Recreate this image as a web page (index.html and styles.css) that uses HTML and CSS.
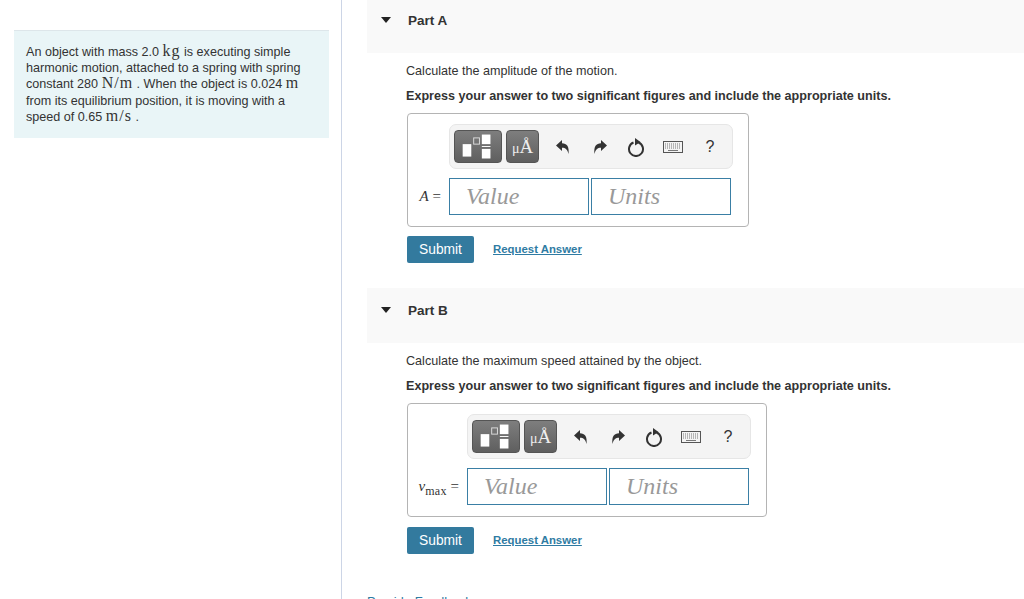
FILE: index.html
```html
<!DOCTYPE html>
<html lang="en">
<head>
    <meta charset="UTF-8">
    <title>Simple Harmonic Motion</title>
    <link rel="stylesheet" href="styles.css">
</head>
<body>
    <div class="page-container">
        <aside class="sidebar">
            <div class="intro">
                An object with mass 2.0 <span class="math">kg</span> is executing simple harmonic motion, attached to a spring with spring constant 280 <span class="math">N/m</span> . When the object is 0.024 <span class="math">m</span> from its equilibrium position, it is moving with a speed of 0.65 <span class="math">m/s</span> .
            </div>
        </aside>

        <main class="main-content">
            <!-- Part A -->
            <section class="part part-a">
                <div class="part-header">
                    <span class="caret"></span>
                    <h2>Part A</h2>
                </div>
                <p class="question">Calculate the amplitude of the motion.</p>
                <p class="instruction">Express your answer to two significant figures and include the appropriate units.</p>
                <div class="answer-box">
                    <div class="toolbar">
                        <button class="tool-btn templates" type="button">
                            <svg width="48" height="32" viewBox="0 0 48 32">
                                <rect x="8" y="13" width="9" height="13" fill="#fff"/>
                                <rect x="19.500" y="6.500" width="6" height="6.500" fill="none" stroke="#ddd"/>
                                <rect x="28" y="3" width="9" height="10" fill="#fff"/>
                                <rect x="28" y="15" width="9" height="1" fill="#fff"/>
                                <rect x="28" y="18" width="9" height="10" fill="#fff"/>
                            </svg>
                        </button>
                        <button class="tool-btn symbols" type="button"><span class="mu">μ</span>Å</button>
                        <span class="tool-icon undo">
                            <svg width="16" height="16" viewBox="0 0 16 16"><path d="M1 6.500 7 1V4.200C11.800 4.200 14.500 7.500 13.500 15 12.500 10.500 10.500 8.800 7 8.800V12Z" fill="#333"/></svg>
                        </span>
                        <span class="tool-icon redo">
                            <svg width="16" height="16" viewBox="0 0 16 16"><path d="M15 6.500 9 1V4.200C4.200 4.200 1.500 7.500 2.500 15 3.500 10.500 5.500 8.800 9 8.800V12Z" fill="#333"/></svg>
                        </span>
                        <span class="tool-icon reset">
                            <svg width="18" height="20" viewBox="0 0 18 20"><path d="M6.500 5.500A7 7 0 1 0 11.500 5.500" fill="none" stroke="#333" stroke-width="2"/><path d="M8 1 13.500 5 8 8.500Z" fill="#333"/></svg>
                        </span>
                        <span class="tool-icon keyboard">
                            <svg width="20" height="12" viewBox="0 0 20 12"><rect x=".5" y=".5" width="19" height="11" fill="#f4f4f4" stroke="#555"/><path d="M2 3h16M2 5h16M2 7h16" stroke="#777" stroke-dasharray="1 1"/><path d="M5 9.500h10" stroke="#777"/></svg>
                        </span>
                        <span class="tool-icon help">?</span>
                    </div>
                    <div class="answer-row">
                        <span class="var-label"><i>A</i> =</span>
                        <div class="field">Value</div>
                        <div class="field">Units</div>
                    </div>
                </div>
                <div class="actions">
                    <button class="submit" type="button">Submit</button>
                    <a class="request" href="#">Request Answer</a>
                </div>
            </section>

            <!-- Part B -->
            <section class="part part-b">
                <div class="part-header">
                    <span class="caret"></span>
                    <h2>Part B</h2>
                </div>
                <p class="question">Calculate the maximum speed attained by the object.</p>
                <p class="instruction">Express your answer to two significant figures and include the appropriate units.</p>
                <div class="answer-box">
                    <div class="toolbar">
                        <button class="tool-btn templates" type="button">
                            <svg width="48" height="32" viewBox="0 0 48 32">
                                <rect x="8" y="13" width="9" height="13" fill="#fff"/>
                                <rect x="19.500" y="6.500" width="6" height="6.500" fill="none" stroke="#ddd"/>
                                <rect x="28" y="3" width="9" height="10" fill="#fff"/>
                                <rect x="28" y="15" width="9" height="1" fill="#fff"/>
                                <rect x="28" y="18" width="9" height="10" fill="#fff"/>
                            </svg>
                        </button>
                        <button class="tool-btn symbols" type="button"><span class="mu">μ</span>Å</button>
                        <span class="tool-icon undo">
                            <svg width="16" height="16" viewBox="0 0 16 16"><path d="M1 6.500 7 1V4.200C11.800 4.200 14.500 7.500 13.500 15 12.500 10.500 10.500 8.800 7 8.800V12Z" fill="#333"/></svg>
                        </span>
                        <span class="tool-icon redo">
                            <svg width="16" height="16" viewBox="0 0 16 16"><path d="M15 6.500 9 1V4.200C4.200 4.200 1.500 7.500 2.500 15 3.500 10.500 5.500 8.800 9 8.800V12Z" fill="#333"/></svg>
                        </span>
                        <span class="tool-icon reset">
                            <svg width="18" height="20" viewBox="0 0 18 20"><path d="M6.500 5.500A7 7 0 1 0 11.500 5.500" fill="none" stroke="#333" stroke-width="2"/><path d="M8 1 13.500 5 8 8.500Z" fill="#333"/></svg>
                        </span>
                        <span class="tool-icon keyboard">
                            <svg width="20" height="12" viewBox="0 0 20 12"><rect x=".5" y=".5" width="19" height="11" fill="#f4f4f4" stroke="#555"/><path d="M2 3h16M2 5h16M2 7h16" stroke="#777" stroke-dasharray="1 1"/><path d="M5 9.500h10" stroke="#777"/></svg>
                        </span>
                        <span class="tool-icon help">?</span>
                    </div>
                    <div class="answer-row">
                        <span class="var-label"><i>v</i><sub>max</sub> =</span>
                        <div class="field">Value</div>
                        <div class="field">Units</div>
                    </div>
                </div>
                <div class="actions">
                    <button class="submit" type="button">Submit</button>
                    <a class="request" href="#">Request Answer</a>
                </div>
            </section>

            <a class="feedback" href="#">Provide Feedback</a>
        </main>
    </div>
</body>
</html>
```

FILE: styles.css
```css
* {
    margin: 0;
    padding: 0;
    box-sizing: border-box;
}

html,
body {
    height: 599px;
    overflow: hidden;
}

body {
    font-family: "Liberation Sans", Arial, sans-serif;
    font-size: 12.600px;
    color: #333;
    background: white;
}

.page-container {
    display: flex;
    height: 599px;
}

.sidebar {
    width: 342px;
    flex: none;
    padding: 30px 12px 0 14px;
    border-right: 1px solid #ccd5e6;
}

.intro {
    height: 108px;
    padding: 13px 12px 0 12px;
    background: #e9f5f7;
    border-top: 1px solid #dde6ea;
    line-height: 16.200px;
}

.math {
    font-family: "Liberation Serif", serif;
    font-size: 16px;
    line-height: 0;
    letter-spacing: 1px;
}

.main-content {
    flex: 1;
    min-width: 0;
    padding-left: 25px;
}

.part-header {
    display: flex;
    align-items: flex-start;
    background: #f9f9f9;
    padding-left: 14px;
}

.part-a .part-header {
    height: 53px;
    padding-top: 13px;
}

.part-b .part-header {
    height: 55px;
    padding-top: 15px;
}

.caret {
    width: 0;
    height: 0;
    margin-top: 4px;
    margin-right: 17px;
    border-left: 5.500px solid transparent;
    border-right: 5.500px solid transparent;
    border-top: 6px solid #222;
}

.part-header h2 {
    font-size: 13.500px;
    line-height: 15px;
    font-weight: bold;
}

.question {
    margin: 11px 0 0 39px;
    line-height: 15px;
}

.instruction {
    margin: 10px 0 0 39px;
    line-height: 15px;
    font-weight: bold;
}

.answer-box {
    margin: 9px 0 0 40px;
    width: 342px;
    height: 114px;
    border: 1px solid #b4b4b4;
    border-radius: 4px;
    padding: 10px 17px 0 10px;
}

.part-b .answer-box {
    width: 360px;
}

.toolbar {
    display: flex;
    align-items: center;
    width: 284px;
    height: 45px;
    margin-left: auto;
    margin-right: -2px;
    padding-left: 4px;
    background: #f4f4f4;
    border: 1px solid #e6e6e6;
    border-radius: 7px;
}

.tool-btn {
    height: 33px;
    border: 1px solid #555;
    border-radius: 4px;
    background: linear-gradient(#7e7e7e, #5f5f5f);
    color: #eee;
    font-family: "Liberation Serif", serif;
    display: flex;
    align-items: center;
    justify-content: center;
}

.templates {
    width: 48px;
    margin-right: 4px;
}

.symbols {
    width: 33px;
    font-size: 19px;
}

.mu {
    font-size: 14px;
    margin-top: 4px;
}

.tool-icon {
    display: flex;
    justify-content: center;
    align-items: center;
    height: 24px;
}

.undo {
    width: 16px;
    margin-left: 16px;
}

.redo {
    width: 16px;
    margin-left: 21px;
}

.reset {
    width: 18px;
    margin-left: 19px;
}

.keyboard {
    width: 20px;
    margin-left: 18px;
}

.help {
    width: 12px;
    margin-left: 21px;
    font-size: 16px;
}

.answer-row {
    display: flex;
    align-items: center;
    justify-content: flex-end;
    gap: 2px;
    margin-top: 9px;
}

.var-label {
    margin-right: 6px;
    font-family: "Liberation Serif", serif;
    font-size: 15px;
    white-space: nowrap;
}

.var-label sub {
    font-size: 12px;
    line-height: 0;
    letter-spacing: 0.300px;
}

.field {
    width: 140px;
    height: 37px;
    padding-left: 16px;
    border: 1px solid #3a7fa5;
    font-family: "Liberation Serif", serif;
    font-style: italic;
    font-size: 24px;
    line-height: 35px;
    color: #999;
}

.actions {
    display: flex;
    align-items: center;
    margin: 9px 0 0 40px;
}

.part-b .actions {
    margin-top: 10px;
}

.submit {
    width: 67px;
    height: 27px;
    border: none;
    border-radius: 2px;
    background: #337a9e;
    color: white;
    font-family: inherit;
    font-size: 13.800px;
}

.request {
    margin: 0 0 2px 19px;
    font-size: 11.400px;
    font-weight: bold;
    color: #2f7ba3;
    text-decoration: underline;
}

.part-b {
    margin-top: 25px;
}

.feedback {
    display: block;
    margin-top: 40px;
    font-size: 13px;
    color: #2f7ba3;
    text-decoration: none;
}
```
